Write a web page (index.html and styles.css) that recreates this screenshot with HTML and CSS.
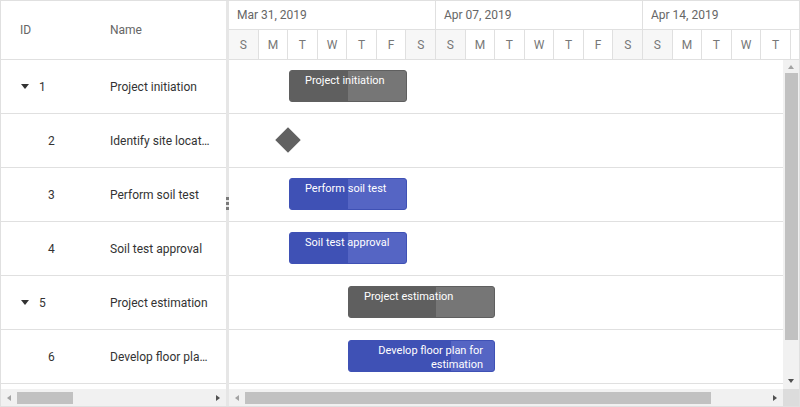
FILE: index.html
```html
<!DOCTYPE html>
<html lang="en">
<head>
    <meta charset="UTF-8">
    <title>Gantt</title>
    <link rel="stylesheet" href="styles.css">
</head>
<body>
    <div class="gantt">
        <div class="grid-pane">
            <div class="grid-header">
                <div class="col-id">ID</div>
                <div class="col-name">Name</div>
            </div>
            <div class="grid-body">
                <div class="grid-row">
                    <div class="col-id"><span class="expander"></span>1</div>
                    <div class="col-name">Project initiation</div>
                </div>
                <div class="grid-row">
                    <div class="col-id"><span class="indent"></span>2</div>
                    <div class="col-name">Identify site location</div>
                </div>
                <div class="grid-row">
                    <div class="col-id"><span class="indent"></span>3</div>
                    <div class="col-name">Perform soil test</div>
                </div>
                <div class="grid-row">
                    <div class="col-id"><span class="indent"></span>4</div>
                    <div class="col-name">Soil test approval</div>
                </div>
                <div class="grid-row">
                    <div class="col-id"><span class="expander"></span>5</div>
                    <div class="col-name">Project estimation</div>
                </div>
                <div class="grid-row">
                    <div class="col-id"><span class="indent"></span>6</div>
                    <div class="col-name">Develop floor plan for estimation</div>
                </div>
            </div>
            <div class="hscroll">
                <div class="arrow-box"><span class="tri-left"></span></div>
                <div class="thumb grid-thumb"></div>
                <div class="spacer"></div>
                <div class="arrow-box"><span class="tri-right"></span></div>
            </div>
        </div>

        <div class="splitter">
            <span class="grip"></span>
            <span class="grip"></span>
            <span class="grip"></span>
        </div>

        <div class="chart-pane">
            <div class="timeline">
                <div class="week">
                    <div class="week-label">Mar 31, 2019</div>
                    <div class="days">
                        <div class="day weekend">S</div><div class="day">M</div><div class="day">T</div><div class="day">W</div><div class="day">T</div><div class="day">F</div><div class="day weekend">S</div>
                    </div>
                </div>
                <div class="week">
                    <div class="week-label">Apr 07, 2019</div>
                    <div class="days">
                        <div class="day weekend">S</div><div class="day">M</div><div class="day">T</div><div class="day">W</div><div class="day">T</div><div class="day">F</div><div class="day weekend">S</div>
                    </div>
                </div>
                <div class="week">
                    <div class="week-label">Apr 14, 2019</div>
                    <div class="days">
                        <div class="day weekend">S</div><div class="day">M</div><div class="day">T</div><div class="day">W</div><div class="day">T</div><div class="day">F</div><div class="day weekend">S</div>
                    </div>
                </div>
            </div>

            <div class="chart-main">
                <div class="chart-body">
                    <div class="chart-row">
                        <div class="bar parent" style="left: 60px; width: 118px;">
                            <div class="progress" style="width: 50%;"></div>
                            <div class="bar-label">Project initiation</div>
                        </div>
                    </div>
                    <div class="chart-row">
                        <div class="milestone" style="left: 50px;"></div>
                    </div>
                    <div class="chart-row">
                        <div class="bar child" style="left: 60px; width: 118px;">
                            <div class="progress" style="width: 50%;"></div>
                            <div class="bar-label">Perform soil test</div>
                        </div>
                    </div>
                    <div class="chart-row">
                        <div class="bar child" style="left: 60px; width: 118px;">
                            <div class="progress" style="width: 50%;"></div>
                            <div class="bar-label">Soil test approval</div>
                        </div>
                    </div>
                    <div class="chart-row">
                        <div class="bar parent" style="left: 119px; width: 147px;">
                            <div class="progress" style="width: 60%;"></div>
                            <div class="bar-label">Project estimation</div>
                        </div>
                    </div>
                    <div class="chart-row">
                        <div class="bar child" style="left: 119px; width: 147px;">
                            <div class="progress" style="width: 70%;"></div>
                            <div class="bar-label right">Develop floor plan for estimation</div>
                        </div>
                    </div>
                </div>
                <div class="vscroll">
                    <div class="arrow-box-v top"><span class="tri-up"></span></div>
                    <div class="thumb-v"></div>
                    <div class="spacer"></div>
                    <div class="arrow-box-v"><span class="tri-down"></span></div>
                </div>
            </div>

            <div class="hscroll-row">
                <div class="hscroll">
                    <div class="arrow-box"><span class="tri-left"></span></div>
                    <div class="thumb chart-thumb"></div>
                    <div class="spacer"></div>
                    <div class="arrow-box"><span class="tri-right"></span></div>
                </div>
                <div class="corner"></div>
            </div>
        </div>
    </div>
</body>
</html>
```

FILE: styles.css
```css
body { margin: 0; font-family: Roboto, "Liberation Sans", sans-serif; background: #fff; }

.gantt { width: 800px; height: 407px; box-sizing: border-box; border: 1px solid #e0e0e0; display: flex; overflow: hidden; }

/* left grid */
.grid-pane { width: 225px; display: flex; flex-direction: column; flex-shrink: 0; }
.grid-header { height: 58px; flex-shrink: 0; border-bottom: 1px solid #e0e0e0; display: flex; align-items: center; font-size: 12px; color: #666; }
.grid-body { flex: 1; overflow: hidden; }
.grid-row { height: 53px; border-bottom: 1px solid #e0e0e0; display: flex; align-items: center; font-size: 12px; color: #333; }
.col-id { width: 109px; padding-left: 20px; box-sizing: border-box; display: flex; align-items: center; flex-shrink: 0; }
.grid-header .col-id { padding-left: 19px; }
.col-name { flex: 1; min-width: 0; padding-right: 15px; white-space: nowrap; overflow: hidden; text-overflow: ellipsis; }
.expander { width: 0; height: 0; border-left: 4px solid transparent; border-right: 4px solid transparent; border-top: 5px solid #333; margin-right: 10px; }
.indent { width: 27px; }

/* splitter */
.splitter { width: 3px; background: #e6e6e6; display: flex; flex-direction: column; justify-content: center; align-items: center; gap: 2px; flex-shrink: 0; }
.grip { width: 3px; height: 3px; background: #7a7a7a; }

/* timeline */
.chart-pane { flex: 1; min-width: 0; display: flex; flex-direction: column; }
.timeline { height: 58px; flex-shrink: 0; border-bottom: 1px solid #e0e0e0; display: flex; overflow: hidden; }
.week { width: 207px; flex-shrink: 0; border-right: 1px solid #e0e0e0; box-sizing: border-box; display: flex; flex-direction: column; }
.week-label { height: 29px; box-sizing: border-box; border-bottom: 1px solid #e0e0e0; padding-left: 8px; font-size: 12px; color: #666; line-height: 28px; }
.days { flex: 1; display: flex; }
.day { flex: 1; border-right: 1px solid #e0e0e0; font-size: 12px; color: #777; display: flex; align-items: center; justify-content: center; }
.day:last-child { border-right: none; }
.weekend { background: #f7f7f7; }

/* chart */
.chart-main { flex: 1; min-height: 0; display: flex; }
.chart-body { flex: 1; overflow: hidden; }
.chart-row { height: 53px; border-bottom: 1px solid #e0e0e0; position: relative; }

.bar { position: absolute; top: 10px; height: 32px; box-sizing: border-box; border-radius: 3px; overflow: hidden; color: #fff; }
.bar.parent { background: #767676; border: 1px solid #5f5f5f; }
.bar.parent .progress { background: #5f5f5f; }
.bar.child { background: #5565c4; border: 1px solid #3f51b5; }
.bar.child .progress { background: #3f51b5; }
.progress { position: absolute; left: 0; top: 0; bottom: 0; }
.bar-label { position: relative; padding: 3px 15px 0; font-size: 11px; line-height: 14px; white-space: nowrap; }
.bar-label.right { white-space: normal; text-align: right; padding-right: 11px; padding-left: 12px; }

.milestone { position: absolute; top: 17px; width: 18px; height: 18px; background: #616161; transform: rotate(45deg); }

/* scrollbars */
.hscroll { height: 17px; flex-shrink: 0; background: #f1f1f1; display: flex; align-items: center; }
.hscroll-row { height: 17px; flex-shrink: 0; display: flex; }
.hscroll-row .hscroll { flex: 1; }
.corner { width: 16px; background: #dcdcdc; }
.arrow-box { width: 16px; height: 17px; display: flex; align-items: center; justify-content: center; flex-shrink: 0; }
.thumb { height: 12px; background: #c1c1c1; flex-shrink: 0; }
.grid-thumb { width: 56px; }
.chart-thumb { width: 466px; }
.spacer { flex: 1; }
.tri-left { width: 0; height: 0; border-top: 3px solid transparent; border-bottom: 3px solid transparent; border-right: 4px solid #a3a3a3; }
.tri-right { width: 0; height: 0; border-top: 3px solid transparent; border-bottom: 3px solid transparent; border-left: 4px solid #505050; }

.vscroll { width: 16px; background: #f1f1f1; display: flex; flex-direction: column; align-items: center; }
.arrow-box-v { height: 16px; width: 16px; display: flex; align-items: center; justify-content: center; flex-shrink: 0; }
.arrow-box-v.top { height: 13px; }
.thumb-v { width: 13px; height: 267px; background: #c1c1c1; flex-shrink: 0; }
.tri-up { width: 0; height: 0; border-left: 3px solid transparent; border-right: 3px solid transparent; border-bottom: 4px solid #a3a3a3; }
.tri-down { width: 0; height: 0; border-left: 3px solid transparent; border-right: 3px solid transparent; border-top: 4px solid #505050; }
```
